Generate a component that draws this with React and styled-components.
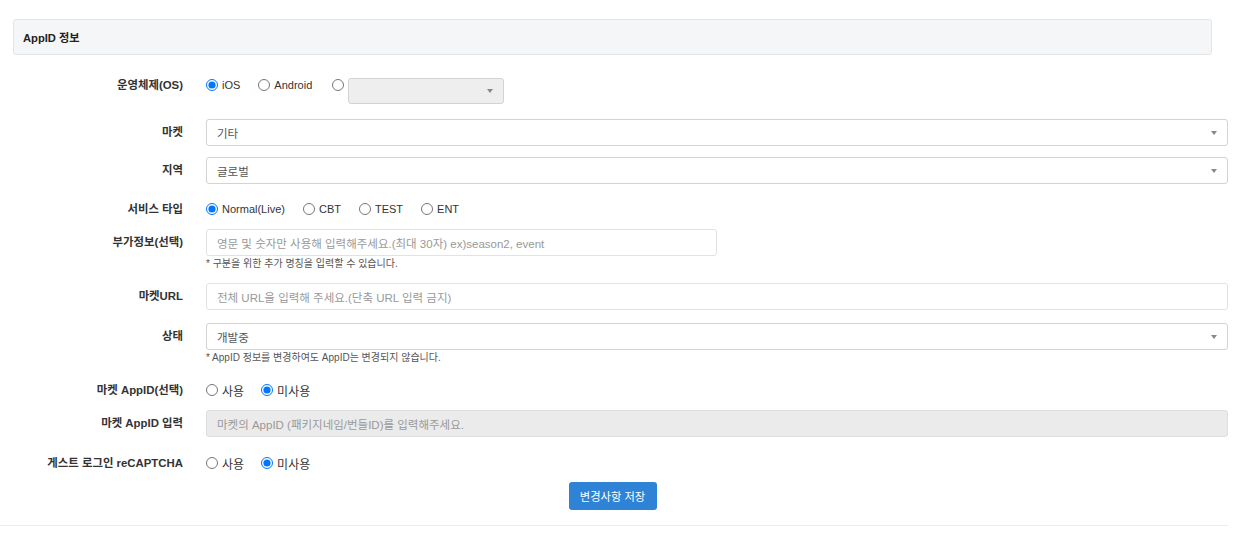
import React from "react";
import styled, { createGlobalStyle } from "styled-components";

const Global = createGlobalStyle`
  html, body { margin: 0; padding: 0; background: #fff; }
  body {
    font-family: "Liberation Sans", Arial, "Noto Sans CJK KR", sans-serif;
    font-size: 11.5px;
    color: #333;
  }
  * { box-sizing: border-box; }
`;

const Page = styled.div`
  width: 1228px;
  padding-top: 19px;
`;

const Header = styled.div`
  margin: 0 16px 0 13px;
  height: 36px;
  background: #f5f6f8;
  border: 1px solid #e4e5e7;
  border-radius: 3px;
  display: flex;
  align-items: center;
  padding-left: 9px;
  font-weight: bold;
  font-size: 11.2px;
  color: #222;
`;

const Form = styled.div`
  display: flex;
  flex-direction: column;
`;

const Row = styled.div`
  display: grid;
  grid-template-columns: 183px 1fr;
  column-gap: 23px;
  margin-top: ${(p) => p.$top}px;
  align-items: start;
`;

const Label = styled.div`
  text-align: right;
  font-weight: bold;
  font-size: 11.4px;
  color: #333;
  height: ${(p) => p.$h || 27}px;
  line-height: ${(p) => p.$h || 27}px;
  white-space: nowrap;
`;

const Field = styled.div`
  display: flex;
  flex-direction: column;
`;

const RadioGroup = styled.div`
  display: flex;
  align-items: center;
  height: 26px;
`;

const RadioLabel = styled.label`
  display: inline-flex;
  align-items: center;
  margin-right: ${(p) => (p.$last ? 0 : p.$ko ? 17 : 18)}px;
  margin-left: ${(p) => p.$ml || 0}px;
  color: #333;
  font-size: ${(p) => (p.$ko ? 12 : 11)}px;
  white-space: nowrap;
`;

const Radio = styled.input.attrs({ type: "radio" })`
  width: 12px;
  height: 12px;
  margin: 0 4px 0 0;
  accent-color: #0075ff;
`;

const SelectBox = styled.div`
  position: relative;
  width: ${(p) => p.$w || "100%"};
  height: ${(p) => p.$h || 27}px;
  border: 1px solid #d3d3d3;
  border-radius: 3px;
  background: ${(p) => (p.$disabled ? "#eeeeee" : "#fff")};
  display: flex;
  align-items: center;
  padding-left: 10px;
  color: #555;
  font-size: 11.5px;
  margin-top: ${(p) => p.$mt || 0}px;
  margin-left: ${(p) => p.$ml || 0}px;
`;

const Caret = styled.span`
  position: absolute;
  right: 10px;
  top: 50%;
  margin-top: -2px;
  width: 0;
  height: 0;
  border-left: 3.5px solid transparent;
  border-right: 3.5px solid transparent;
  border-top: 4px solid #888;
`;

const Input = styled.div`
  width: ${(p) => p.$w || "100%"};
  height: 27px;
  border: 1px solid ${(p) => (p.$disabled ? "#dedede" : "#e2e2e2")};
  border-radius: 3px;
  background: ${(p) => (p.$disabled ? "#ebebeb" : "#fff")};
  display: flex;
  align-items: center;
  padding-left: 10px;
  color: #999;
  font-size: 11.5px;
  white-space: nowrap;
`;

const Help = styled.div`
  font-size: 10px;
  color: #555;
  height: 15px;
  line-height: 15px;
  white-space: nowrap;
`;

const Actions = styled.div`
  display: flex;
  justify-content: center;
  margin-top: 6px;
`;

const Button = styled.button`
  width: 88px;
  height: 28px;
  border: none;
  border-radius: 3px;
  background: #2e83d6;
  color: #fff;
  font-family: inherit;
  font-size: 11.3px;
  margin-right: 3px;
`;

const Divider = styled.div`
  margin-top: 15px;
  border-top: 1px solid #ececec;
`;

function Select({ children, ...rest }) {
  return (
    <SelectBox {...rest}>
      {children}
      <Caret />
    </SelectBox>
  );
}

export default function App() {
  return (
    <>
      <Global />
      <Page>
        <Header>AppID 정보</Header>
        <Form>
          <Row $top={17}>
            <Label $h={26}>운영체제(OS)</Label>
            <RadioGroup>
              <RadioLabel>
                <Radio name="os" defaultChecked />
                iOS
              </RadioLabel>
              <RadioLabel>
                <Radio name="os" />
                Android
              </RadioLabel>
              <RadioLabel $last $ml={2}>
                <Radio name="os" />
              </RadioLabel>
              <Select $w="156px" $h={26} $disabled $mt={11} $ml={0} />
            </RadioGroup>
          </Row>

          <Row $top={21}>
            <Label>마켓</Label>
            <Select>기타</Select>
          </Row>

          <Row $top={11}>
            <Label>지역</Label>
            <Select>글로벌</Select>
          </Row>

          <Row $top={12}>
            <Label $h={26}>서비스 타입</Label>
            <RadioGroup>
              <RadioLabel>
                <Radio name="svc" defaultChecked />
                Normal(Live)
              </RadioLabel>
              <RadioLabel>
                <Radio name="svc" />
                CBT
              </RadioLabel>
              <RadioLabel>
                <Radio name="svc" />
                TEST
              </RadioLabel>
              <RadioLabel $last>
                <Radio name="svc" />
                ENT
              </RadioLabel>
            </RadioGroup>
          </Row>

          <Row $top={7}>
            <Label>부가정보(선택)</Label>
            <Field>
              <Input $w="511px">영문 및 숫자만 사용해 입력해주세요.(최대 30자) ex)season2, event</Input>
              <Help>* 구분을 위한 추가 명칭을 입력할 수 있습니다.</Help>
            </Field>
          </Row>

          <Row $top={12}>
            <Label>마켓URL</Label>
            <Input>전체 URL을 입력해 주세요.(단축 URL 입력 금지)</Input>
          </Row>

          <Row $top={13}>
            <Label>상태</Label>
            <Field>
              <Select>개발중</Select>
              <Help>* AppID 정보를 변경하여도 AppID는 변경되지 않습니다.</Help>
            </Field>
          </Row>

          <Row $top={12}>
            <Label $h={26}>마켓 AppID(선택)</Label>
            <RadioGroup>
              <RadioLabel $ko>
                <Radio name="mk" />
                사용
              </RadioLabel>
              <RadioLabel $ko $last>
                <Radio name="mk" defaultChecked />
                미사용
              </RadioLabel>
            </RadioGroup>
          </Row>

          <Row $top={7}>
            <Label>마켓 AppID 입력</Label>
            <Input $disabled>마켓의 AppID (패키지네임/번들ID)를 입력해주세요.</Input>
          </Row>

          <Row $top={13}>
            <Label $h={26}>게스트 로그인 reCAPTCHA</Label>
            <RadioGroup>
              <RadioLabel $ko>
                <Radio name="rc" />
                사용
              </RadioLabel>
              <RadioLabel $ko $last>
                <Radio name="rc" defaultChecked />
                미사용
              </RadioLabel>
            </RadioGroup>
          </Row>

          <Actions>
            <Button>변경사항 저장</Button>
          </Actions>
          <Divider />
        </Form>
      </Page>
    </>
  );
}
